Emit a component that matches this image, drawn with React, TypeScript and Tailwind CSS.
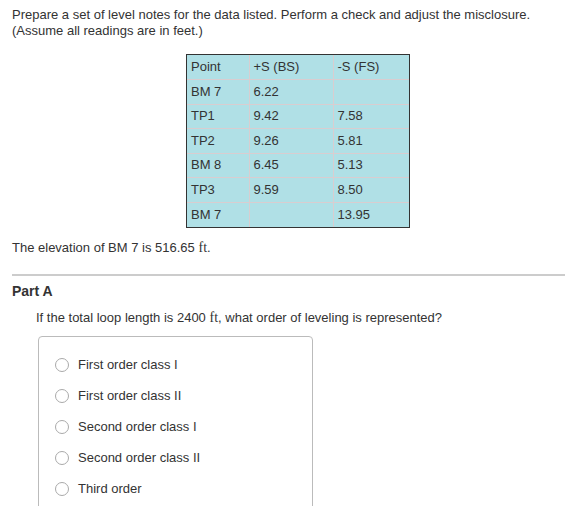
import React from "react";

const rows = [
  ["Point", "+S (BS)", "-S (FS)"],
  ["BM 7", "6.22", ""],
  ["TP1", "9.42", "7.58"],
  ["TP2", "9.26", "5.81"],
  ["BM 8", "6.45", "5.13"],
  ["TP3", "9.59", "8.50"],
  ["BM 7", "", "13.95"],
];

const options = [
  "First order class I",
  "First order class II",
  "Second order class I",
  "Second order class II",
  "Third order",
];

export default function App() {
  return (
    <div
      className="w-[565px] h-[506px] overflow-hidden bg-white text-[#333] text-[13px] leading-[16px]"
      style={{ fontFamily: '"Liberation Sans", Arial, sans-serif' }}
    >
      <div className="pl-[12px] pt-[7px]">
        <p>Prepare a set of level notes for the data listed. Perform a check and adjust the misclosure.</p>
        <p>(Assume all readings are in feet.)</p>
      </div>
      <div className="flex pl-[186px] mt-[15px]">
        <div className="border border-[#333] bg-[#b0e0e6]">
          <table className="border-collapse text-[13px]">
            <tbody>
              {rows.map((r, i) => (
                <tr
                  key={i}
                  className={i < rows.length - 1 ? "h-[24.5px] border-b border-[#d9cdd0]" : "h-[24.5px]"}
                >
                  <td className="w-[62px] border-r border-[#d9cdd0] pl-[4px] align-middle">{r[0]}</td>
                  <td className="w-[84px] border-r border-[#d9cdd0] pl-[4px] align-middle">{r[1]}</td>
                  <td className="w-[76px] pl-[4px] align-middle">{r[2]}</td>
                </tr>
              ))}
            </tbody>
          </table>
        </div>
      </div>
      <p className="pl-[12px] mt-[12px]">
        The elevation of BM 7 is 516.65{" "}
        <span style={{ fontFamily: '"Liberation Serif", serif' }} className="text-[14px]">ft</span>.
      </p>
      <div className="ml-[12px] mt-[18px] h-[2px] bg-[#ccc]" />
      <p className="pl-[12px] mt-[7px] font-bold text-[14px]">Part A</p>
      <p className="pl-[36px] mt-[11px]">
        If the total loop length is 2400{" "}
        <span style={{ fontFamily: '"Liberation Serif", serif' }} className="text-[14px]">ft</span>, what order of leveling is represented?
      </p>
      <div className="ml-[38px] mt-[10px] w-[275px] h-[200px] border border-[#bbb] rounded-[4px] pt-[13px]">
        {options.map((o) => (
          <div key={o} className="flex items-center h-[31px] pl-[16px]">
            <span className="w-[14px] h-[14px] rounded-full border border-[#aaa] bg-white" />
            <span className="ml-[9px]">{o}</span>
          </div>
        ))}
      </div>
    </div>
  );
}
